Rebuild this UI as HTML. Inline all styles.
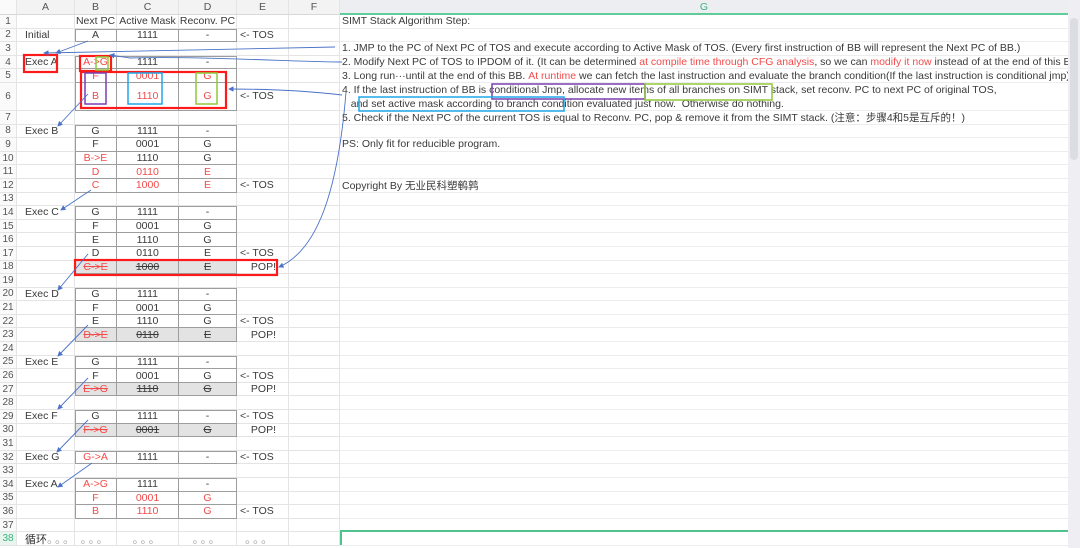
<!DOCTYPE html>
<html><head><meta charset="utf-8">
<style>
*{margin:0;padding:0;box-sizing:border-box}
body{width:1080px;height:548px;overflow:hidden;background:#fff;font-family:"Liberation Sans","Noto Sans CJK SC",sans-serif;font-size:10.5px;color:#3a3a3a;position:relative}
.r{display:flex;height:13.6px}
.r.t{height:28px}
.c{height:100%;border-right:1px solid #e4e4e4;border-bottom:1px solid #e4e4e4;text-align:center;white-space:nowrap;overflow:visible;display:flex;align-items:center;justify-content:center}
.n{width:17px;color:#555;font-size:10px;background:#fafafa}
.a{width:58px;justify-content:flex-start;padding-left:8px}
.b{width:42px}.cc{width:62px}.d{width:58px}
.e{width:52px;justify-content:flex-start;padding-left:3px}
.f{width:51px}
.g{width:728px;justify-content:flex-start;text-align:left;padding-left:2px;border-bottom:1px solid #ececf1;border-right:none;position:relative}
.k{border-right-color:#9d9d9d;border-bottom-color:#9d9d9d}
.kl{box-shadow:inset 1px 0 #9d9d9d}
.kt{box-shadow:inset 0 1px #9d9d9d}
.klt{box-shadow:inset 1px 0 #9d9d9d,inset 0 1px #9d9d9d}
.red{color:#f24b4b}
.s{text-decoration:line-through}
.gr{background:#e3e3e3}
.pop{justify-content:flex-end;padding-right:12px}
.h{height:15px;display:flex;background:#f3f3f3}
.h .c{color:#555;font-size:10.5px;border-bottom:1px solid #d8d8d8}
.rt{color:#f24b4b}
.dt{color:#aaa;font-size:12px;letter-spacing:2px}
</style></head><body>
<div class="h"><div class="c n"></div><div class="c a" style="justify-content:center;padding:0">A</div><div class="c b">B</div><div class="c cc">C</div><div class="c d">D</div><div class="c e" style="justify-content:center;padding:0">E</div><div class="c f">F</div><div class="c g" style="justify-content:center;color:#3bb47e;background:#eceef2;border-bottom:2px solid #5fcc9c;padding:0">G</div></div>

<div class="r"><div class="c n">1</div><div class="c a"></div><div class="c b">Next PC</div><div class="c cc">Active Mask</div><div class="c d">Reconv. PC</div><div class="c e"></div><div class="c f"></div><div class="c g">SIMT Stack Algorithm Step:</div></div>
<div class="r"><div class="c n">2</div><div class="c a">Initial</div><div class="c b k klt">A</div><div class="c cc k kt">1111</div><div class="c d k kt">-</div><div class="c e">&lt;- TOS</div><div class="c f"></div><div class="c g"></div></div>
<div class="r"><div class="c n">3</div><div class="c a"></div><div class="c b"></div><div class="c cc"></div><div class="c d"></div><div class="c e"></div><div class="c f"></div><div class="c g">1. JMP to the PC of Next PC of TOS and execute according to Active Mask of TOS. (Every first instruction of BB will represent the Next PC of BB.)</div></div>
<div class="r"><div class="c n">4</div><div class="c a">Exec A</div><div class="c b k klt red">A-&gt;G</div><div class="c cc k kt">1111</div><div class="c d k kt">-</div><div class="c e"></div><div class="c f"></div><div class="c g">2. Modify Next PC of TOS to IPDOM of it. (It can be determined&nbsp;<span class="rt">at compile time through CFG analysis</span>, so we can&nbsp;<span class="rt">modify it now</span>&nbsp;instead of at the end of this BB</div></div>
<div class="r"><div class="c n">5</div><div class="c a"></div><div class="c b k kl red">F</div><div class="c cc k red">0001</div><div class="c d k red">G</div><div class="c e"></div><div class="c f"></div><div class="c g">3. Long run···until at the end of this BB.&nbsp;<span class="rt">At runtime</span>&nbsp;we can fetch the last instruction and evaluate the branch condition(If the last instruction is conditional jmp).</div></div>
<div class="r t"><div class="c n">6</div><div class="c a"></div><div class="c b k kl red">B</div><div class="c cc k red">1110</div><div class="c d k red">G</div><div class="c e">&lt;- TOS</div><div class="c f"></div><div class="c g" style="display:block;line-height:13.6px;padding-top:1.5px">4. If the last instruction of BB is conditional Jmp, allocate new items of all branches on SIMT stack, set reconv. PC to next PC of original TOS,<br>&nbsp;&nbsp;&nbsp;and set active mask according to branch condition evaluated just now.&nbsp; Otherwise do nothing.</div></div>
<div class="r"><div class="c n">7</div><div class="c a"></div><div class="c b"></div><div class="c cc"></div><div class="c d"></div><div class="c e"></div><div class="c f"></div><div class="c g">5. Check if the Next PC of the current TOS is equal to Reconv. PC, pop &amp; remove it from the SIMT stack. (注意：步骤4和5是互斥的！)</div></div>
<div class="r"><div class="c n">8</div><div class="c a">Exec B</div><div class="c b k klt">G</div><div class="c cc k kt">1111</div><div class="c d k kt">-</div><div class="c e"></div><div class="c f"></div><div class="c g"></div></div>
<div class="r"><div class="c n">9</div><div class="c a"></div><div class="c b k kl">F</div><div class="c cc k">0001</div><div class="c d k">G</div><div class="c e"></div><div class="c f"></div><div class="c g">PS: Only fit for reducible program.</div></div>
<div class="r"><div class="c n">10</div><div class="c a"></div><div class="c b k kl red">B-&gt;E</div><div class="c cc k">1110</div><div class="c d k">G</div><div class="c e"></div><div class="c f"></div><div class="c g"></div></div>
<div class="r"><div class="c n">11</div><div class="c a"></div><div class="c b k kl red">D</div><div class="c cc k red">0110</div><div class="c d k red">E</div><div class="c e"></div><div class="c f"></div><div class="c g"></div></div>
<div class="r"><div class="c n">12</div><div class="c a"></div><div class="c b k kl red">C</div><div class="c cc k red">1000</div><div class="c d k red">E</div><div class="c e">&lt;- TOS</div><div class="c f"></div><div class="c g">Copyright By 无业民科塑鹌鹑</div></div>
<div class="r"><div class="c n">13</div><div class="c a"></div><div class="c b"></div><div class="c cc"></div><div class="c d"></div><div class="c e"></div><div class="c f"></div><div class="c g"></div></div>
<div class="r"><div class="c n">14</div><div class="c a">Exec C</div><div class="c b k klt">G</div><div class="c cc k kt">1111</div><div class="c d k kt">-</div><div class="c e"></div><div class="c f"></div><div class="c g"></div></div>
<div class="r"><div class="c n">15</div><div class="c a"></div><div class="c b k kl">F</div><div class="c cc k">0001</div><div class="c d k">G</div><div class="c e"></div><div class="c f"></div><div class="c g"></div></div>
<div class="r"><div class="c n">16</div><div class="c a"></div><div class="c b k kl">E</div><div class="c cc k">1110</div><div class="c d k">G</div><div class="c e"></div><div class="c f"></div><div class="c g"></div></div>
<div class="r"><div class="c n">17</div><div class="c a"></div><div class="c b k kl">D</div><div class="c cc k">0110</div><div class="c d k">E</div><div class="c e">&lt;- TOS</div><div class="c f"></div><div class="c g"></div></div>
<div class="r"><div class="c n">18</div><div class="c a"></div><div class="c b k kl red s gr">C-&gt;E</div><div class="c cc k s gr">1000</div><div class="c d k s gr">E</div><div class="c e pop">POP!</div><div class="c f"></div><div class="c g"></div></div>
<div class="r"><div class="c n">19</div><div class="c a"></div><div class="c b"></div><div class="c cc"></div><div class="c d"></div><div class="c e"></div><div class="c f"></div><div class="c g"></div></div>
<div class="r"><div class="c n">20</div><div class="c a">Exec D</div><div class="c b k klt">G</div><div class="c cc k kt">1111</div><div class="c d k kt">-</div><div class="c e"></div><div class="c f"></div><div class="c g"></div></div>
<div class="r"><div class="c n">21</div><div class="c a"></div><div class="c b k kl">F</div><div class="c cc k">0001</div><div class="c d k">G</div><div class="c e"></div><div class="c f"></div><div class="c g"></div></div>
<div class="r"><div class="c n">22</div><div class="c a"></div><div class="c b k kl">E</div><div class="c cc k">1110</div><div class="c d k">G</div><div class="c e">&lt;- TOS</div><div class="c f"></div><div class="c g"></div></div>
<div class="r"><div class="c n">23</div><div class="c a"></div><div class="c b k kl red s gr">D-&gt;E</div><div class="c cc k s gr">0110</div><div class="c d k s gr">E</div><div class="c e pop">POP!</div><div class="c f"></div><div class="c g"></div></div>
<div class="r"><div class="c n">24</div><div class="c a"></div><div class="c b"></div><div class="c cc"></div><div class="c d"></div><div class="c e"></div><div class="c f"></div><div class="c g"></div></div>
<div class="r"><div class="c n">25</div><div class="c a">Exec E</div><div class="c b k klt">G</div><div class="c cc k kt">1111</div><div class="c d k kt">-</div><div class="c e"></div><div class="c f"></div><div class="c g"></div></div>
<div class="r"><div class="c n">26</div><div class="c a"></div><div class="c b k kl">F</div><div class="c cc k">0001</div><div class="c d k">G</div><div class="c e">&lt;- TOS</div><div class="c f"></div><div class="c g"></div></div>
<div class="r"><div class="c n">27</div><div class="c a"></div><div class="c b k kl red s gr">E-&gt;G</div><div class="c cc k s gr">1110</div><div class="c d k s gr">G</div><div class="c e pop">POP!</div><div class="c f"></div><div class="c g"></div></div>
<div class="r"><div class="c n">28</div><div class="c a"></div><div class="c b"></div><div class="c cc"></div><div class="c d"></div><div class="c e"></div><div class="c f"></div><div class="c g"></div></div>
<div class="r"><div class="c n">29</div><div class="c a">Exec F</div><div class="c b k klt">G</div><div class="c cc k kt">1111</div><div class="c d k kt">-</div><div class="c e">&lt;- TOS</div><div class="c f"></div><div class="c g"></div></div>
<div class="r"><div class="c n">30</div><div class="c a"></div><div class="c b k kl red s gr">F-&gt;G</div><div class="c cc k s gr">0001</div><div class="c d k s gr">G</div><div class="c e pop">POP!</div><div class="c f"></div><div class="c g"></div></div>
<div class="r"><div class="c n">31</div><div class="c a"></div><div class="c b"></div><div class="c cc"></div><div class="c d"></div><div class="c e"></div><div class="c f"></div><div class="c g"></div></div>
<div class="r"><div class="c n">32</div><div class="c a">Exec G</div><div class="c b k klt red">G-&gt;A</div><div class="c cc k kt">1111</div><div class="c d k kt">-</div><div class="c e">&lt;- TOS</div><div class="c f"></div><div class="c g"></div></div>
<div class="r"><div class="c n">33</div><div class="c a"></div><div class="c b"></div><div class="c cc"></div><div class="c d"></div><div class="c e"></div><div class="c f"></div><div class="c g"></div></div>
<div class="r"><div class="c n">34</div><div class="c a">Exec A</div><div class="c b k klt red">A-&gt;G</div><div class="c cc k kt">1111</div><div class="c d k kt">-</div><div class="c e"></div><div class="c f"></div><div class="c g"></div></div>
<div class="r"><div class="c n">35</div><div class="c a"></div><div class="c b k kl red">F</div><div class="c cc k red">0001</div><div class="c d k red">G</div><div class="c e"></div><div class="c f"></div><div class="c g"></div></div>
<div class="r"><div class="c n">36</div><div class="c a"></div><div class="c b k kl red">B</div><div class="c cc k red">1110</div><div class="c d k red">G</div><div class="c e">&lt;- TOS</div><div class="c f"></div><div class="c g"></div></div>
<div class="r"><div class="c n">37</div><div class="c a"></div><div class="c b"></div><div class="c cc"></div><div class="c d"></div><div class="c e"></div><div class="c f"></div><div class="c g" style="border-bottom:2px solid #4fc28e"></div></div>
<div class="r"><div class="c n" style="color:#3bb47e;background:#e8f4ee">38</div><div class="c a" style="font-size:11px;color:#333">循环<span class="dt">。。。</span></div><div class="c b dt">。。。</div><div class="c cc dt">。。。</div><div class="c d dt">。。。</div><div class="c e dt" style="padding-left:8px">。。。</div><div class="c f"></div><div class="c g" style="box-shadow:inset 2px 0 #4fc28e"></div></div>

<div style="position:absolute;right:0;top:0;width:12px;height:548px;background:#efeff3"></div>
<div style="position:absolute;right:2px;top:18px;width:8px;height:142px;background:#dcdce3;border-radius:4px"></div>

<svg width="1080" height="548" style="position:absolute;left:0;top:0" fill="none">
<defs><marker id="m" markerWidth="6" markerHeight="6" refX="5" refY="3" orient="auto"><path d="M0,0 L6,3 L0,6 z" fill="#4a72c8"/></marker></defs>
<g stroke="#ff1a1a" stroke-width="2.2">
<rect x="24" y="55" width="33" height="17"/>
<rect x="80" y="56" width="31" height="15"/>
<rect x="81" y="72" width="145" height="36"/>
<rect x="75" y="260" width="202" height="15"/>
</g>
<g stroke-width="1.5">
<rect x="96" y="57" width="12" height="13" stroke="#8fc93a"/>
<rect x="85" y="73" width="21" height="31" stroke="#7a3fb0"/>
<rect x="128" y="73" width="34" height="31" stroke="#1ea7e8"/>
<rect x="196" y="73" width="21" height="31" stroke="#8fc93a"/>
<rect x="492" y="84" width="153" height="15" stroke="#7a3fb0"/>
<rect x="645" y="84" width="127" height="16" stroke="#8fc93a"/>
<rect x="359" y="97" width="205" height="14" stroke="#1ea7e8"/>
</g>
<g stroke="#4a72c8" stroke-width="0.9" marker-end="url(#m)">
<path d="M88,41 L56,53"/>
<path d="M335,47 L44,53"/>
<path d="M342,62 C300,62 200,56 130,58 L110,55"/>
<path d="M342,95 C300,90 260,89 229,89"/>
<path d="M88,94 L58,126"/>
<path d="M91,190 L61,210"/>
<path d="M346,92 C338,190 318,250 279,267"/>
<path d="M88,254 L58,290"/>
<path d="M88,325 L58,356"/>
<path d="M88,378 L58,409"/>
<path d="M88,420 L57,452"/>
<path d="M92,463 L58,487"/>
</g>
</svg>
</body></html>
